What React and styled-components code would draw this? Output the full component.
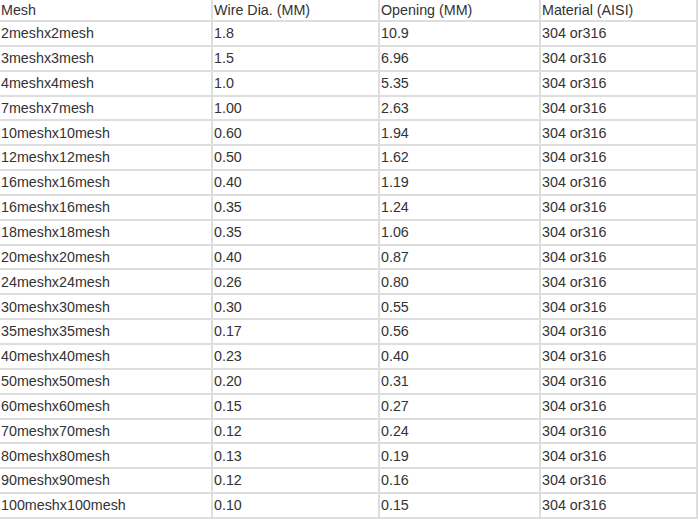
import React from 'react';
import styled, { createGlobalStyle } from 'styled-components';

const GlobalStyle = createGlobalStyle`
  html, body {
    margin: 0;
    padding: 0;
    background: #ffffff;
  }
`;

const Table = styled.div`
  width: 700px;
  height: 520px;
  overflow: hidden;
  font-family: 'Liberation Sans', Arial, sans-serif;
  font-size: 14.3px;
  color: #333333;
`;

const Row = styled.div`
  display: grid;
  grid-template-columns: 213px 167px 161px 157px;
  height: ${({ $height }) => $height}px;
  box-sizing: border-box;
`;

const Cell = styled.div`
  display: flex;
  align-items: center;
  padding-left: 1px;
  border-right: 2px solid #dedede;
  border-bottom: 2px solid #dedede;
  box-sizing: border-box;
  white-space: nowrap;
  line-height: 1;
`;

const header = ['Mesh', 'Wire Dia. (MM)', 'Opening (MM)', 'Material (AISI)'];

const rows = [
  ['2meshx2mesh', '1.8', '10.9'],
  ['3meshx3mesh', '1.5', '6.96'],
  ['4meshx4mesh', '1.0', '5.35'],
  ['7meshx7mesh', '1.00', '2.63'],
  ['10meshx10mesh', '0.60', '1.94'],
  ['12meshx12mesh', '0.50', '1.62'],
  ['16meshx16mesh', '0.40', '1.19'],
  ['16meshx16mesh', '0.35', '1.24'],
  ['18meshx18mesh', '0.35', '1.06'],
  ['20meshx20mesh', '0.40', '0.87'],
  ['24meshx24mesh', '0.26', '0.80'],
  ['30meshx30mesh', '0.30', '0.55'],
  ['35meshx35mesh', '0.17', '0.56'],
  ['40meshx40mesh', '0.23', '0.40'],
  ['50meshx50mesh', '0.20', '0.31'],
  ['60meshx60mesh', '0.15', '0.27'],
  ['70meshx70mesh', '0.12', '0.24'],
  ['80meshx80mesh', '0.13', '0.19'],
  ['90meshx90mesh', '0.12', '0.16'],
  ['100meshx100mesh', '0.10', '0.15'],
];

const App = () => (
  <>
    <GlobalStyle />
    <Table>
      <Row $height={22}>
        {header.map((h) => (
          <Cell key={h}>{h}</Cell>
        ))}
      </Row>
      {rows.map((r, idx) => (
        <Row key={idx} $height={24.85}>
          <Cell>{r[0]}</Cell>
          <Cell>{r[1]}</Cell>
          <Cell>{r[2]}</Cell>
          <Cell>304 or316</Cell>
        </Row>
      ))}
    </Table>
  </>
);

export default App;
